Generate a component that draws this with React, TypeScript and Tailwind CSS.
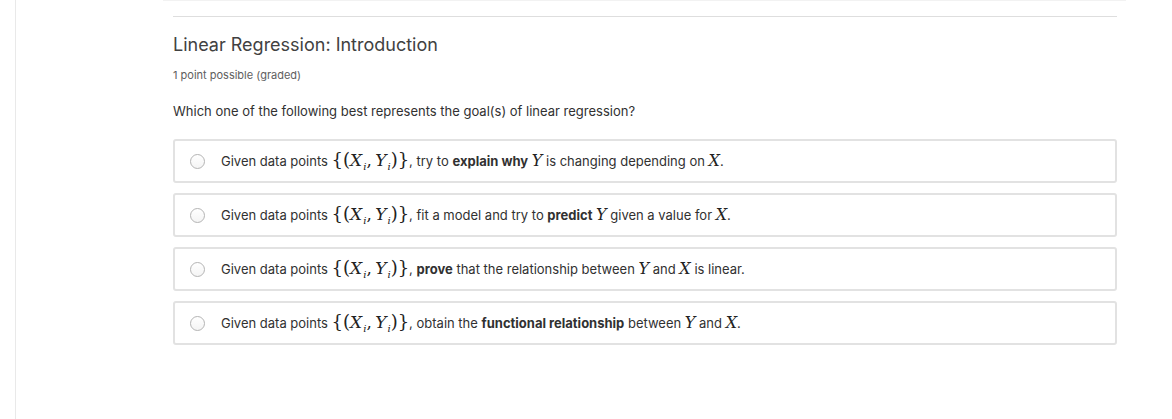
import { ReactNode } from "react";

function Pair() {
  return (
    <span className="font-['DejaVu_Serif','Liberation_Serif',serif] text-[17px] leading-[14px] text-[#222]">
      <span className="text-[18px]">{"{("}</span>
      <i>X</i>
      <i className="relative top-[4px] ml-[1px] text-[10px] leading-none">i</i>
      <span>,{"\u2009"}</span>
      <i>Y</i>
      <i className="relative top-[4px] ml-[1px] text-[10px] leading-none">i</i>
      <span className="text-[18px]">{")}"}</span>
    </span>
  );
}

function V({ children }: { children: ReactNode }) {
  return (
    <i className="font-['DejaVu_Serif','Liberation_Serif',serif] text-[16px] leading-[14px] text-[#222]">
      {children}
    </i>
  );
}

const options: ReactNode[] = [
  <>
    , try to <b className="font-bold">explain why</b> <V>Y</V> is changing depending on <V>X</V>.
  </>,
  <>
    , fit a model and try to <b className="font-bold">predict</b> <V>Y</V> given a value for <V>X</V>.
  </>,
  <>
    , <b className="font-bold">prove</b> that the relationship between <V>Y</V> and <V>X</V> is linear.
  </>,
  <>
    , obtain the <b className="font-bold">functional relationship</b> between <V>Y</V> and <V>X</V>.
  </>,
];

export default function App() {
  return (
    <div className="flex h-[419px] w-full bg-white font-['Inter','Liberation_Sans',sans-serif] text-[#313131]">
      <div className="w-[15px]" />
      <div className="flex-1 border-l border-[#e9e9e9] pl-[147px]">
        <div className="w-[963px] border-t border-[#f2f2f2] px-[10px]">
          <div className="mt-[15px] w-[944px] border-t border-[#dedede]" />
          <h2 className="mt-[16px] text-[18px] leading-[24px] text-[#414141]">
            Linear Regression: Introduction
          </h2>
          <p className="mt-[11px] text-[11px] leading-[14px] text-[#5e5e5e]">
            1 point possible (graded)
          </p>
          <p className="mt-[20px] text-[13px] leading-[18px]">
            Which one of the following best represents the goal(s) of linear regression?
          </p>
          <div className="mt-[19px] flex w-[944px] flex-col gap-[10px]">
            {options.map((rest, i) => (
              <label
                key={i}
                className="flex h-[44px] items-center rounded-[3px] border-2 border-[#e2e2e2] pl-[15px]"
              >
                <span className="h-[15px] w-[15px] shrink-0 rounded-full border border-[#b4b4b4] bg-gradient-to-b from-white to-[#f4f4f4]" />
                <span className="ml-[16px] text-[13px] leading-[18px] text-[#313131]">
                  Given data points <Pair />
                  {rest}
                </span>
              </label>
            ))}
          </div>
        </div>
      </div>
    </div>
  );
}
